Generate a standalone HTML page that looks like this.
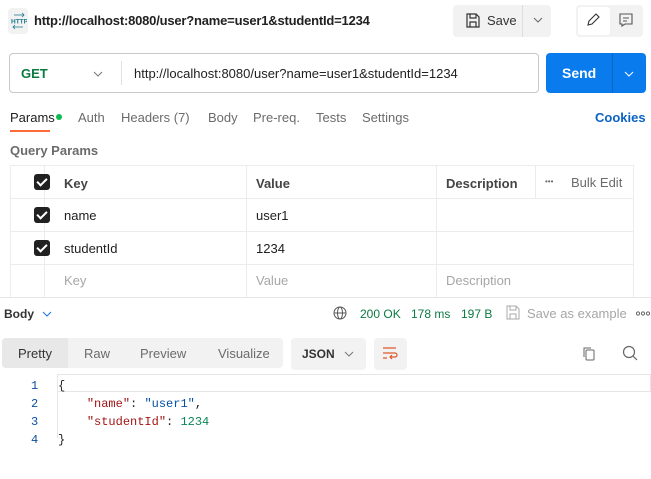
<!DOCTYPE html>
<html><head><meta charset="utf-8"><style>
*{box-sizing:border-box;margin:0;padding:0}
body{width:651px;height:479px;background:#fff;font-family:"Liberation Sans",sans-serif;font-size:13px;color:#212121;position:relative;overflow:hidden}
.a{position:absolute;white-space:nowrap}
.g{color:#6b6b6b}
.l{color:#a6a6a6}
.mono{font-family:"Liberation Mono",monospace;font-size:12px}
.cb{position:absolute;width:16px;height:16px;background:#212121;border-radius:3px}
.cb:after{content:"";position:absolute;left:5px;top:2px;width:4px;height:8px;border:solid #fff;border-width:0 2px 2px 0;transform:rotate(45deg)}
</style></head><body>
<!-- header -->
<div class="a" style="left:8px;top:8px;width:20px;height:26px;background:#f2f2f2;border-radius:4px"></div>
<svg class="a" style="left:10px;top:12px" width="17" height="18"><path d="M4 3h10 M12 1l2 2-2 2 M3 15h10 M5 13l-2 2 2 2" fill="none" stroke="#1d7a8c" stroke-width="0.8"/><text x="1" y="11.5" font-size="6.5" font-family="Liberation Sans" fill="#1d7a8c" font-weight="bold">HTTP</text></svg>
<div class="a" style="left:34px;top:13px;font-size:13px;font-weight:bold;color:#212121;letter-spacing:-0.2px">http://localhost:8080/user?name=user1&amp;studentId=1234</div>
<div class="a" style="left:453px;top:5px;width:98px;height:32px;background:#f2f2f2;border-radius:4px"></div>
<div class="a" style="left:522px;top:5px;width:1px;height:32px;background:#dedede"></div>
<svg class="a" style="left:466px;top:13px" width="14" height="15" viewBox="0 0 14 15"><path d="M1 1h9l3 3v10H1z M4 1v4h6V1 M4 14v-5h6v5" fill="none" stroke="#333" stroke-width="1.2"/></svg>
<div class="a" style="left:487px;top:13px;color:#333">Save</div>
<svg class="a" style="left:533px;top:17px" width="10" height="6"><path d="M1 1l4 4 4-4" fill="none" stroke="#666"/></svg>
<div class="a" style="left:576px;top:5px;width:67px;height:32px;background:#f2f2f2;border-radius:4px"></div>
<div class="a" style="left:578px;top:7px;width:32px;height:28px;background:#fff;border-radius:3px"></div>
<svg class="a" style="left:586px;top:13px" width="14" height="14"><path d="M2 12l1-4 7-7 3 3-7 7z" fill="none" stroke="#333" stroke-width="1.1"/></svg>
<svg class="a" style="left:619px;top:13px" width="14" height="14"><path d="M1 1h12v10H6l-3 2v-2H1z M4 5h6 M4 8h4" fill="none" stroke="#555" stroke-width="1.1"/></svg>
<!-- url bar -->
<div class="a" style="left:9px;top:53px;width:530px;height:40px;border:1px solid #c8c8c8;border-radius:4px"></div>
<div class="a" style="left:21px;top:66px;font-weight:bold;color:#0b7a42">GET</div>
<svg class="a" style="left:93px;top:71px" width="10" height="6"><path d="M1 1l4 4 4-4" fill="none" stroke="#777"/></svg>
<div class="a" style="left:121px;top:61px;width:1px;height:24px;background:#e0e0e0"></div>
<div class="a" style="left:134px;top:66px;color:#212121">http://localhost:8080/user?name=user1&amp;studentId=1234</div>
<div class="a" style="left:546px;top:53px;width:100px;height:40px;background:#097bed;border-radius:4px"></div>
<div class="a" style="left:612px;top:53px;width:1px;height:40px;background:#0a66c2"></div>
<div class="a" style="left:562px;top:65px;color:#fff;font-weight:bold;font-size:14px">Send</div>
<svg class="a" style="left:624px;top:71px" width="10" height="6"><path d="M1 1l4 4 4-4" fill="none" stroke="#fff"/></svg>
<!-- tabs -->
<div class="a" style="left:10px;top:110px;color:#212121">Params</div>
<div class="a" style="left:56px;top:114px;width:6px;height:6px;border-radius:50%;background:#0cbb52"></div>
<div class="a" style="left:10px;top:130px;width:40px;height:2px;background:#ff6c37"></div>
<div class="a g" style="left:78px;top:110px">Auth</div>
<div class="a g" style="left:121px;top:110px">Headers (7)</div>
<div class="a g" style="left:208px;top:110px">Body</div>
<div class="a g" style="left:253px;top:110px">Pre-req.</div>
<div class="a g" style="left:316px;top:110px">Tests</div>
<div class="a g" style="left:362px;top:110px">Settings</div>
<div class="a" style="left:595px;top:110px;color:#0b63c4;font-weight:bold">Cookies</div>
<div class="a" style="left:10px;top:143px;color:#6b6b6b;font-weight:bold">Query Params</div>
<!-- table -->
<div class="a" style="left:10px;top:165px;width:624px;height:133px;border:1px solid #ececec;border-bottom:none"></div>
<div class="a" style="left:10px;top:198px;width:624px;height:1px;background:#ececec"></div>
<div class="a" style="left:10px;top:231px;width:624px;height:1px;background:#ececec"></div>
<div class="a" style="left:10px;top:264px;width:624px;height:1px;background:#ececec"></div>
<div class="a" style="left:44px;top:165px;width:1px;height:133px;background:#ececec"></div>
<div class="a" style="left:246px;top:165px;width:1px;height:133px;background:#ececec"></div>
<div class="a" style="left:436px;top:165px;width:1px;height:133px;background:#ececec"></div>
<div class="a" style="left:535px;top:165px;width:1px;height:33px;background:#ececec"></div>
<div class="cb" style="left:34px;top:174px"></div>
<div class="cb" style="left:34px;top:207px"></div>
<div class="cb" style="left:34px;top:240px"></div>
<div class="a" style="left:64px;top:176px;color:#444;font-weight:bold">Key</div>
<div class="a" style="left:256px;top:176px;color:#444;font-weight:bold">Value</div>
<div class="a" style="left:446px;top:176px;color:#444;font-weight:bold">Description</div>
<div class="a g" style="left:545px;top:177px;font-size:8px">•••</div>
<div class="a g" style="left:571px;top:175px">Bulk Edit</div>
<div class="a" style="left:64px;top:208px">name</div>
<div class="a" style="left:256px;top:208px">user1</div>
<div class="a" style="left:64px;top:241px">studentId</div>
<div class="a" style="left:256px;top:241px">1234</div>
<div class="a l" style="left:64px;top:273px">Key</div>
<div class="a l" style="left:256px;top:273px">Value</div>
<div class="a l" style="left:446px;top:273px">Description</div>
<div class="a" style="left:0;top:297px;width:651px;height:1px;background:#e6e6e6"></div>
<!-- response bar -->
<div class="a" style="left:4px;top:307px;color:#333;font-size:12px;font-weight:bold">Body</div>
<svg class="a" style="left:42px;top:311px" width="10" height="6"><path d="M1 1l4 4 4-4" fill="none" stroke="#1a73e8"/></svg>
<svg class="a" style="left:333px;top:306px" width="14" height="14"><circle cx="7" cy="7" r="6" fill="none" stroke="#555"/><ellipse cx="7" cy="7" rx="2.5" ry="6" fill="none" stroke="#555"/><path d="M1 7h12" stroke="#555"/></svg>
<div class="a" style="left:360px;top:307px;color:#0b7a42;font-size:12px">200 OK</div>
<div class="a" style="left:411px;top:307px;color:#0b7a42;font-size:12px">178 ms</div>
<div class="a" style="left:461px;top:307px;color:#0b7a42;font-size:12px">197 B</div>
<svg class="a" style="left:506px;top:305px" width="14" height="15"><path d="M1 1h9l3 3v10H1z M4 1v4h6V1 M4 14v-5h6v5" fill="none" stroke="#aaa"/></svg>
<div class="a l" style="left:527px;top:306px">Save as example</div>
<svg class="a" style="left:636px;top:311px" width="15" height="5"><circle cx="2" cy="2.5" r="1.6" fill="none" stroke="#666"/><circle cx="7" cy="2.5" r="1.6" fill="none" stroke="#666"/><circle cx="12" cy="2.5" r="1.6" fill="none" stroke="#666"/></svg>
<!-- view tabs -->
<div class="a" style="left:2px;top:338px;width:281px;height:30px;background:#f2f2f2;border-radius:4px"></div>
<div class="a" style="left:2px;top:338px;width:66px;height:30px;background:#e8e8e8;border-radius:4px 0 0 4px"></div>
<div class="a" style="left:18px;top:346px;color:#333">Pretty</div>
<div class="a g" style="left:84px;top:346px">Raw</div>
<div class="a g" style="left:140px;top:346px">Preview</div>
<div class="a g" style="left:218px;top:346px">Visualize</div>
<div class="a" style="left:291px;top:338px;width:75px;height:32px;background:#f2f2f2;border-radius:4px"></div>
<div class="a" style="left:302px;top:347px;color:#333;font-weight:bold;font-size:12px">JSON</div>
<svg class="a" style="left:344px;top:351px" width="10" height="6"><path d="M1 1l4 4 4-4" fill="none" stroke="#777"/></svg>
<div class="a" style="left:374px;top:338px;width:33px;height:32px;background:#f2f2f2;border-radius:4px"></div>
<svg class="a" style="left:382px;top:346px" width="16" height="14"><path d="M1 2h13 M1 7h12a2 2 0 0 1 0 4H8 M10 9l-2 2 2 2 M1 12h4" fill="none" stroke="#e0582b" stroke-width="1.2"/></svg>
<svg class="a" style="left:582px;top:346px" width="14" height="15"><rect x="4" y="4" width="8" height="10" rx="1" fill="none" stroke="#666"/><path d="M2 11V2h7" fill="none" stroke="#666"/></svg>
<svg class="a" style="left:622px;top:345px" width="16" height="16"><circle cx="7" cy="7" r="5.5" fill="none" stroke="#666" stroke-width="1.2"/><path d="M11 11l4 4" stroke="#666" stroke-width="1.2"/></svg>
<!-- code -->
<div class="a" style="left:57px;top:374px;width:594px;height:18px;border:1px solid #e6e6e6;border-left:none"></div>
<div class="a" style="left:57px;top:374px;width:1px;height:64px;background:#e6e6e6"></div>
<div class="a mono" style="left:31px;top:377px;color:#0b4f9e;line-height:18px">1<br>2<br>3<br>4</div>
<div class="a mono" style="left:58px;top:377px;line-height:18px;color:#212121">{<br>&nbsp;&nbsp;&nbsp;&nbsp;<span style="color:#a31515">"name"</span>: <span style="color:#0451a5">"user1"</span>,<br>&nbsp;&nbsp;&nbsp;&nbsp;<span style="color:#a31515">"studentId"</span>: <span style="color:#098658">1234</span><br>}</div>
</body></html>
